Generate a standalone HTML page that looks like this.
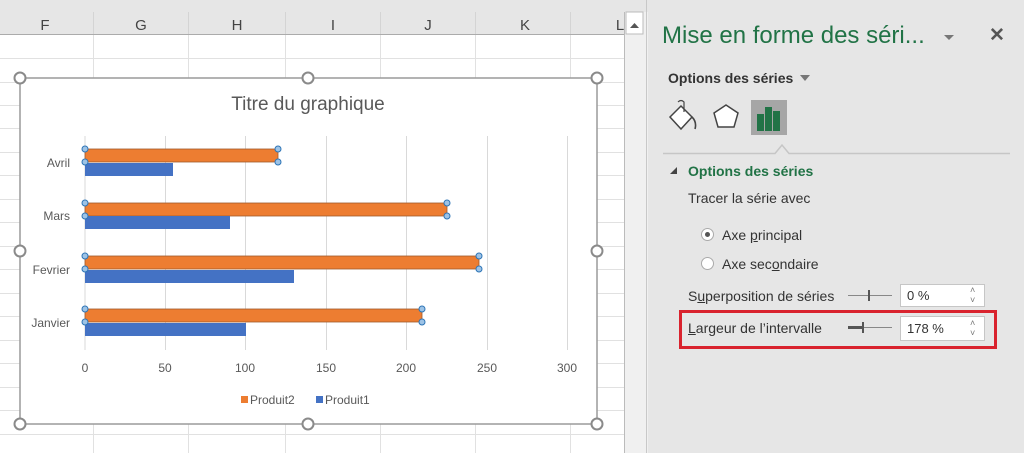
<!DOCTYPE html>
<html><head><meta charset="utf-8"><style>
body{margin:0;width:1024px;height:453px;overflow:hidden;background:#fff;font-family:"Liberation Sans",sans-serif;position:relative}
.a{position:absolute;white-space:nowrap}
</style></head><body>
<svg class="a" style="left:0;top:0" width="648" height="453" xmlns="http://www.w3.org/2000/svg" font-family="Liberation Sans, sans-serif">
<rect x="0" y="0" width="648" height="34" fill="#e6e6e6"/>
<line x1="0" y1="34.5" x2="625" y2="34.5" stroke="#ababab"/>
<g stroke="#d4d4d4">
<line x1="93.5" y1="12" x2="93.5" y2="34"/><line x1="188.5" y1="12" x2="188.5" y2="34"/><line x1="285.5" y1="12" x2="285.5" y2="34"/><line x1="380.5" y1="12" x2="380.5" y2="34"/><line x1="475.5" y1="12" x2="475.5" y2="34"/><line x1="570.5" y1="12" x2="570.5" y2="34"/>
</g>
<g stroke="#e1e1e1">
<line x1="93.5" y1="35" x2="93.5" y2="453"/><line x1="188.5" y1="35" x2="188.5" y2="453"/><line x1="285.5" y1="35" x2="285.5" y2="453"/><line x1="380.5" y1="35" x2="380.5" y2="453"/><line x1="475.5" y1="35" x2="475.5" y2="453"/><line x1="570.5" y1="35" x2="570.5" y2="453"/>
<line x1="0" y1="58.5" x2="625" y2="58.5"/><line x1="0" y1="82.5" x2="625" y2="82.5"/><line x1="0" y1="105.5" x2="625" y2="105.5"/><line x1="0" y1="128.5" x2="625" y2="128.5"/><line x1="0" y1="152.5" x2="625" y2="152.5"/><line x1="0" y1="175.5" x2="625" y2="175.5"/><line x1="0" y1="199.5" x2="625" y2="199.5"/><line x1="0" y1="222.5" x2="625" y2="222.5"/><line x1="0" y1="246.5" x2="625" y2="246.5"/><line x1="0" y1="269.5" x2="625" y2="269.5"/><line x1="0" y1="293.5" x2="625" y2="293.5"/><line x1="0" y1="316.5" x2="625" y2="316.5"/><line x1="0" y1="340.5" x2="625" y2="340.5"/><line x1="0" y1="363.5" x2="625" y2="363.5"/><line x1="0" y1="387.5" x2="625" y2="387.5"/><line x1="0" y1="410.5" x2="625" y2="410.5"/><line x1="0" y1="434.5" x2="625" y2="434.5"/>
</g>
<g font-size="15" fill="#444" text-anchor="middle">
<text x="45" y="30">F</text><text x="141" y="30">G</text><text x="237" y="30">H</text><text x="333" y="30">I</text><text x="428" y="30">J</text><text x="525" y="30">K</text><text x="620" y="30">L</text>
</g>
<rect x="624" y="12" width="24" height="441" fill="#f0f0f0"/>
<line x1="624.5" y1="12" x2="624.5" y2="453" stroke="#bbb"/>
<rect x="626" y="12" width="17" height="22" fill="#fff" stroke="#bbb"/>
<path d="M630 28 L634.5 23 L639 28 Z" fill="#555"/>
<line x1="646.5" y1="0" x2="646.5" y2="453" stroke="#c8c8c8"/>
<rect x="20" y="78" width="577" height="346" fill="#fff" stroke="#9a9a9a" stroke-width="1.5"/>
<text x="308" y="110" font-size="19" fill="#595959" text-anchor="middle">Titre du graphique</text>
<g stroke="#d9d9d9">
<line x1="85" y1="136" x2="85" y2="350"/><line x1="165.5" y1="136" x2="165.5" y2="350"/><line x1="245.5" y1="136" x2="245.5" y2="350"/><line x1="326.5" y1="136" x2="326.5" y2="350"/><line x1="406.5" y1="136" x2="406.5" y2="350"/><line x1="487.5" y1="136" x2="487.5" y2="350"/><line x1="567.5" y1="136" x2="567.5" y2="350"/>
</g>
<g fill="#ed7d31" stroke="#a05a2c" stroke-width="0.8">
<rect x="85" y="149" width="193" height="13"/><rect x="85" y="203" width="362" height="13"/><rect x="85" y="256" width="394" height="13"/><rect x="85" y="309" width="337" height="13"/>
</g>
<g fill="#4472c4">
<rect x="85" y="163" width="88" height="13"/><rect x="85" y="216" width="145" height="13"/><rect x="85" y="270" width="209" height="13"/><rect x="85" y="323" width="161" height="13"/>
</g>
<g fill="#9dc3e6" stroke="#2e75b6" stroke-width="1">
<circle cx="85" cy="149" r="3"/><circle cx="85" cy="162" r="3"/><circle cx="278" cy="149" r="3"/><circle cx="278" cy="162" r="3"/>
<circle cx="85" cy="203" r="3"/><circle cx="85" cy="216" r="3"/><circle cx="447" cy="203" r="3"/><circle cx="447" cy="216" r="3"/>
<circle cx="85" cy="256" r="3"/><circle cx="85" cy="269" r="3"/><circle cx="479" cy="256" r="3"/><circle cx="479" cy="269" r="3"/>
<circle cx="85" cy="309" r="3"/><circle cx="85" cy="322" r="3"/><circle cx="422" cy="309" r="3"/><circle cx="422" cy="322" r="3"/>
</g>
<g font-size="12" fill="#595959" text-anchor="end">
<text x="70" y="167">Avril</text><text x="70" y="220">Mars</text><text x="70" y="274">Fevrier</text><text x="70" y="327">Janvier</text>
</g>
<g font-size="12" fill="#595959" text-anchor="middle">
<text x="85" y="372">0</text><text x="165" y="372">50</text><text x="245" y="372">100</text><text x="326" y="372">150</text><text x="406" y="372">200</text><text x="487" y="372">250</text><text x="567" y="372">300</text>
</g>
<rect x="241" y="396" width="7" height="7" fill="#ed7d31"/><text x="250" y="404" font-size="12" fill="#595959">Produit2</text>
<rect x="316" y="396" width="7" height="7" fill="#4472c4"/><text x="325" y="404" font-size="12" fill="#595959">Produit1</text>
<g fill="#fff" stroke="#8a8a8a" stroke-width="2">
<circle cx="20" cy="78" r="5.5"/><circle cx="308" cy="78" r="5.5"/><circle cx="597" cy="78" r="5.5"/>
<circle cx="20" cy="251" r="5.5"/><circle cx="597" cy="251" r="5.5"/>
<circle cx="20" cy="424" r="5.5"/><circle cx="308" cy="424" r="5.5"/><circle cx="597" cy="424" r="5.5"/>
</g>
</svg>
<div class="a" style="left:648px;top:0;width:376px;height:453px;background:#e6e6e6"></div>
<div class="a" style="left:662px;top:22px;font-size:24px;color:#217346">Mise en forme des séri...</div>
<div class="a" style="left:944px;top:35px;width:0;height:0;border-left:5px solid transparent;border-right:5px solid transparent;border-top:5px solid #777"></div>
<div class="a" style="left:989px;top:24px;font-size:19px;font-weight:bold;color:#555">✕</div>
<div class="a" style="left:668px;top:70px;font-size:14px;font-weight:bold;color:#333">Options des séries</div>
<div class="a" style="left:800px;top:75px;width:0;height:0;border-left:5px solid transparent;border-right:5px solid transparent;border-top:6px solid #777"></div>
<svg class="a" style="left:660px;top:98px" width="360" height="60">
<path d="M10 19 L21 8 L32 19 L21 31 Z" fill="#fff" stroke="#444" stroke-width="1.5"/>
<path d="M18 4 Q21 1 24 4 L24 14" stroke="#444" stroke-width="1.2" fill="none"/>
<path d="M32 19 Q37 24 35 31" stroke="#444" stroke-width="1.6" fill="none"/>
<path d="M54 15 L66 7 L78 15 L74 29 L58 29 Z" fill="#fff" stroke="#444" stroke-width="1.5"/>
<rect x="91" y="2" width="36" height="35" fill="#a6a6a6"/>
<rect x="97" y="16" width="7" height="17" fill="#217346"/><rect x="105" y="9" width="7" height="24" fill="#217346"/><rect x="113" y="13" width="7" height="20" fill="#217346"/>
<path d="M3 55.5 L115 55.5 L122 47 L129 55.5 L350 55.5" stroke="#c6c6c6" fill="#e6e6e6" stroke-width="1.5"/>
</svg>
<div class="a" style="left:670px;top:167px;width:0;height:0;border-left:7px solid transparent;border-bottom:7px solid #444"></div>
<div class="a" style="left:688px;top:163px;font-size:14px;font-weight:bold;color:#217346">Options des séries</div>
<div class="a" style="left:688px;top:190px;font-size:14px;color:#333">Tracer la série avec</div>
<div class="a" style="left:701px;top:228px;width:13px;height:13px;border-radius:50%;background:#fff;border:1px solid #aaa;box-sizing:border-box"></div>
<div class="a" style="left:705px;top:232px;width:5px;height:5px;border-radius:50%;background:#555"></div>
<div class="a" style="left:722px;top:227px;font-size:14px;color:#333">Axe <u>p</u>rincipal</div>
<div class="a" style="left:701px;top:257px;width:13px;height:13px;border-radius:50%;background:#fff;border:1px solid #aaa;box-sizing:border-box"></div>
<div class="a" style="left:722px;top:256px;font-size:14px;color:#333">Axe sec<u>o</u>ndaire</div>
<div class="a" style="left:688px;top:288px;font-size:14px;color:#333">S<u>u</u>perposition de séries</div>
<div class="a" style="left:848px;top:295px;width:44px;height:1px;background:#888"></div>
<div class="a" style="left:868px;top:290px;width:2px;height:11px;background:#555"></div>
<div class="a" style="left:900px;top:284px;width:85px;height:23px;background:#fff;border:1px solid #c6c6c6;box-sizing:border-box"></div>
<div class="a" style="left:907px;top:288px;font-size:13px;color:#333">0 %</div>
<div class="a" style="left:970px;top:285px;font-size:9px;color:#777;line-height:10px">˄<br>˅</div>
<div class="a" style="left:679px;top:310px;width:318px;height:39px;border:3px solid #d9232e;box-sizing:border-box"></div>
<div class="a" style="left:688px;top:320px;font-size:14px;color:#333"><u>L</u>argeur de l’intervalle</div>
<div class="a" style="left:848px;top:327px;width:44px;height:1px;background:#888"></div>
<div class="a" style="left:848px;top:326px;width:16px;height:3px;background:#555"></div>
<div class="a" style="left:862px;top:322px;width:2px;height:11px;background:#555"></div>
<div class="a" style="left:900px;top:316px;width:85px;height:25px;background:#fff;border:1px solid #c6c6c6;box-sizing:border-box"></div>
<div class="a" style="left:907px;top:321px;font-size:13px;color:#333">178 %</div>
<div class="a" style="left:970px;top:318px;font-size:9px;color:#777;line-height:10px">˄<br>˅</div>
</body></html>
